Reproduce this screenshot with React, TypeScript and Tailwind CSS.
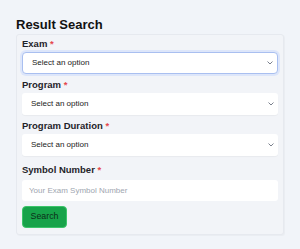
import React from "react";

function Chevron() {
    return (
        <svg width="6" height="4" viewBox="0 0 6 4" className="shrink-0">
            <path d="M0.8 0.8 L3 3 L5.2 0.8" fill="none" stroke="#6b7280" strokeWidth="0.9" strokeLinecap="round" strokeLinejoin="round" />
        </svg>
    );
}

function Label({ text }: { text: string }) {
    return (
        <label className="block h-[12px] leading-[12px] text-[9.5px] font-bold text-[#1f2329]">
            {text} <span className="text-[#e5484d]">*</span>
        </label>
    );
}

function SelectBox({ focused }: { focused?: boolean }) {
    return (
        <div
            className={
                focused
                    ? "mt-[2px] flex h-[22px] items-center justify-between rounded-[4px] border border-[#a9bff0] bg-white pl-[9px] pr-[4px] shadow-[0_0_0_2px_#dde6fa]"
                    : "mt-[2px] flex h-[22px] items-center justify-between rounded-[3px] bg-white pl-[9px] pr-[4px] shadow-[0_1px_1px_rgba(0,0,0,0.04)]"
            }
        >
            <span className="text-[8px] text-[#1a1a1a]">Select an option</span>
            <Chevron />
        </div>
    );
}

export default function App() {
    return (
        <div className="min-h-[249px] w-[300px] bg-[#f1f4f9] px-[16px] pt-[17px] font-['Liberation_Sans',Arial,sans-serif]">
            <h1 className="h-[17px] text-[13px] font-bold leading-[16px] text-[#111]">Result Search</h1>

            {/* Card */}
            <div className="w-[268px] rounded-[3px] border border-[#e6e9ef] bg-[#f2f4f8] px-[5px] pt-[3px] pb-[6px] shadow-[1px_1px_1px_rgba(0,0,0,0.03)]">
                <div>
                    <Label text="Exam" />
                    <SelectBox focused />
                </div>

                <div className="mt-[5px]">
                    <Label text="Program" />
                    <SelectBox />
                </div>

                <div className="mt-[5px]">
                    <Label text="Program Duration" />
                    <SelectBox />
                </div>

                <div className="mt-[8px]">
                    <Label text="Symbol Number" />
                    <div className="mt-[4px] flex h-[21px] items-center rounded-[3px] bg-white pl-[7px]">
                        <span className="text-[8px] text-[#a0a6b0]">Your Exam Symbol Number</span>
                    </div>
                </div>

                <button className="mt-[5px] flex h-[22px] w-[45px] items-center justify-center rounded-[4px] border border-[#3cc46a] bg-[#17a34a] text-[8.8px] text-[#0c2e18]">
                    Search
                </button>
            </div>
        </div>
    );
}
